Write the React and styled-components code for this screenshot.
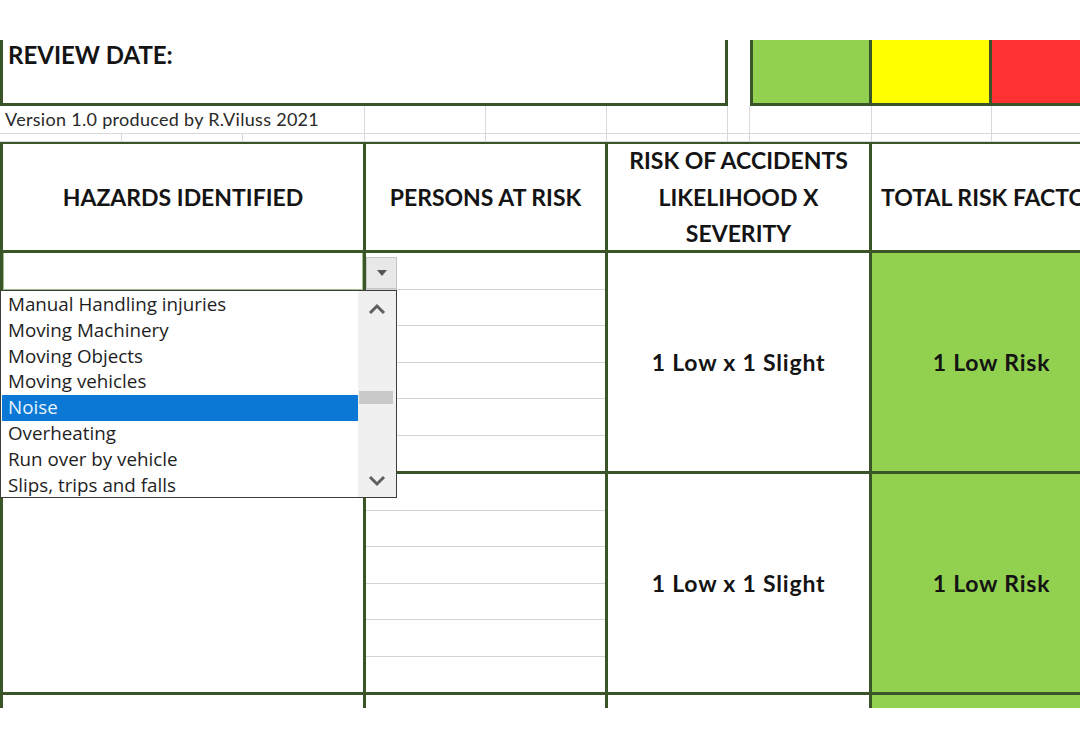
import styled, { createGlobalStyle } from 'styled-components';

const GlobalStyle = createGlobalStyle`
  * { box-sizing: border-box; }
  body {
    margin: 0;
    background: #ffffff;
    font-family: Lato, "Liberation Sans", sans-serif;
    color: #141414;
    overflow: hidden;
  }
`;

const DARK = '#3a5528';
const GRID = '#d9d9d9';
const SHEET_COLS = '122px 121px 122px 121px 121px 121px 22px 122px 120px 121px';

const Page = styled.div`
  width: 1080px;
  height: 743px;
  padding-top: 40px;
  overflow: hidden;
`;

const Sheet = styled.div`
  width: 1113px;
  height: 668px;
  overflow: hidden;
`;

const TopBand = styled.div`
  display: grid;
  grid-template-columns: ${SHEET_COLS};
  height: 66px;
`;

const ReviewBox = styled.div`
  grid-column: 1 / span 6;
  border: 3px solid ${DARK};
  border-top: none;
  padding: 0 0 0 5px;
  font-size: 24px;
  font-weight: 700;
  line-height: 30px;
`;

const ColorBox = styled.div`
  background: ${(p) => p.$fill};
  border-bottom: 3px solid ${DARK};
  border-right: 3px solid ${DARK};
  border-left: ${(p) => (p.$first ? `3px solid ${DARK}` : 'none')};
`;

const GridRow = styled.div`
  display: grid;
  grid-template-columns: ${SHEET_COLS};
  height: ${(p) => p.$h}px;
`;

const GridCell = styled.div`
  grid-column: span ${(p) => p.$span || 1};
  border-right: 1px solid ${GRID};
  border-bottom: 1px solid ${GRID};
  font-size: 18px;
  letter-spacing: 0.3px;
  line-height: 26px;
  padding-left: 5px;
  color: #2a2a2a;
  white-space: nowrap;
`;

const Table = styled.div`
  display: grid;
  grid-template-columns: 363px 242px 264px 242px;
  grid-template-rows: 109px 221px 221px 60px;
  border-left: 3px solid ${DARK};
  border-top: 3px solid ${DARK};
  margin-top: -1px;
`;

const Cell = styled.div`
  position: relative;
  border-right: 3px solid ${DARK};
  border-bottom: 3px solid ${DARK};
  background: ${(p) => p.$fill || '#ffffff'};
  display: flex;
  align-items: center;
  justify-content: center;
  text-align: center;
  font-size: 23px;
  font-weight: 700;
  line-height: 36.5px;
  white-space: nowrap;
`;

const Value = styled.span`
  letter-spacing: 0.8px;
`;

const SubRows = styled.div`
  align-self: stretch;
  flex: 1;
  display: flex;
  flex-direction: column;
`;

const SubRow = styled.div`
  flex: 1;
  border-bottom: 1px solid #d4d4d4;
  &:last-child { border-bottom: none; }
`;

const HazardCell = styled(Cell)`
  align-items: flex-start;
  overflow: visible;
  z-index: 2;
`;

const ActiveCell = styled.div`
  width: 100%;
  height: 37px;
  border: 1px solid #9cbf8c;
  border-top: none;
`;

const DropButton = styled.div`
  position: absolute;
  top: 4px;
  left: 363px;
  width: 31px;
  height: 32px;
  background: #e8e8e8;
  border: 1px solid #c4c4c4;
  display: flex;
  align-items: center;
  justify-content: center;
`;

const ListBox = styled.div`
  position: absolute;
  top: 37px;
  left: -3px;
  width: 397px;
  height: 208px;
  background: #ffffff;
  border: 1px solid #3c3c3c;
  display: flex;
  z-index: 3;
`;

const Items = styled.ul`
  list-style: none;
  margin: 0;
  padding: 1px 0 0 1px;
  flex: 1;
`;

const Item = styled.li`
  height: 25.8px;
  line-height: 25.8px;
  padding-left: 6px;
  font-family: "Open Sans", "Noto Sans", sans-serif;
  font-size: 18.8px;
  font-weight: 400;
  letter-spacing: 0;
  text-align: left;
  color: ${(p) => (p.$selected ? '#e8f3ff' : '#1e1e1e')};
  background: ${(p) => (p.$selected ? '#0a78d4' : 'transparent')};
`;

const ScrollBar = styled.div`
  width: 38px;
  background: #f0f0f0;
  display: flex;
  flex-direction: column;
  align-items: center;
  justify-content: space-between;
  padding: 12px 0 10px;
  position: relative;
`;

const Thumb = styled.div`
  position: absolute;
  left: 1px;
  right: 3px;
  top: 100px;
  height: 13px;
  background: #c9c9c9;
`;

const Chevron = ({ up }) => (
  <svg width="20" height="12" viewBox="0 0 20 12">
    <polyline
      points={up ? '3,10 10,3 17,10' : '3,2 10,9 17,2'}
      fill="none"
      stroke="#5f5f5f"
      strokeWidth="3"
    />
  </svg>
);

const hazards = [
  'Manual Handling injuries',
  'Moving Machinery',
  'Moving Objects',
  'Moving vehicles',
  'Noise',
  'Overheating',
  'Run over by vehicle',
  'Slips, trips and falls',
];

const Persons = () => (
  <Cell>
    <SubRows>
      {[0, 1, 2, 3, 4, 5].map((i) => (
        <SubRow key={i} />
      ))}
    </SubRows>
  </Cell>
);

export default function App() {
  return (
    <Page>
      <GlobalStyle />
      <Sheet>
        <TopBand>
          <ReviewBox>REVIEW DATE:</ReviewBox>
          <div />
          <ColorBox $fill="#92d050" $first />
          <ColorBox $fill="#ffff00" />
          <ColorBox $fill="#ff3131" />
        </TopBand>

        <GridRow $h={28}>
          <GridCell $span={3}>Version 1.0 produced by R.Viluss 2021</GridCell>
          {[0, 1, 2, 3, 4, 5, 6].map((i) => (
            <GridCell key={i} />
          ))}
        </GridRow>
        <GridRow $h={8}>
          {[0, 1, 2, 3, 4, 5, 6, 7, 8, 9].map((i) => (
            <GridCell key={i} />
          ))}
        </GridRow>

        <Table>
          <Cell>HAZARDS IDENTIFIED</Cell>
          <Cell>PERSONS AT RISK</Cell>
          <Cell>
            RISK OF ACCIDENTS
            <br />
            LIKELIHOOD X
            <br />
            SEVERITY
          </Cell>
          <Cell>TOTAL RISK FACTOR</Cell>

          <HazardCell>
            <ActiveCell />
            <DropButton>
              <svg width="10" height="6" viewBox="0 0 10 6">
                <polygon points="0,0 10,0 5,6" fill="#555" />
              </svg>
            </DropButton>
            <ListBox>
              <Items>
                {hazards.map((h) => (
                  <Item key={h} $selected={h === 'Noise'}>
                    {h}
                  </Item>
                ))}
              </Items>
              <ScrollBar>
                <Chevron up />
                <Thumb />
                <Chevron />
              </ScrollBar>
            </ListBox>
          </HazardCell>
          <Persons />
          <Cell><Value>1 Low x 1 Slight</Value></Cell>
          <Cell $fill="#92d050"><Value>1 Low Risk</Value></Cell>

          <Cell />
          <Persons />
          <Cell><Value>1 Low x 1 Slight</Value></Cell>
          <Cell $fill="#92d050"><Value>1 Low Risk</Value></Cell>

          <Cell />
          <Cell />
          <Cell />
          <Cell $fill="#92d050" />
        </Table>
      </Sheet>
    </Page>
  );
}
